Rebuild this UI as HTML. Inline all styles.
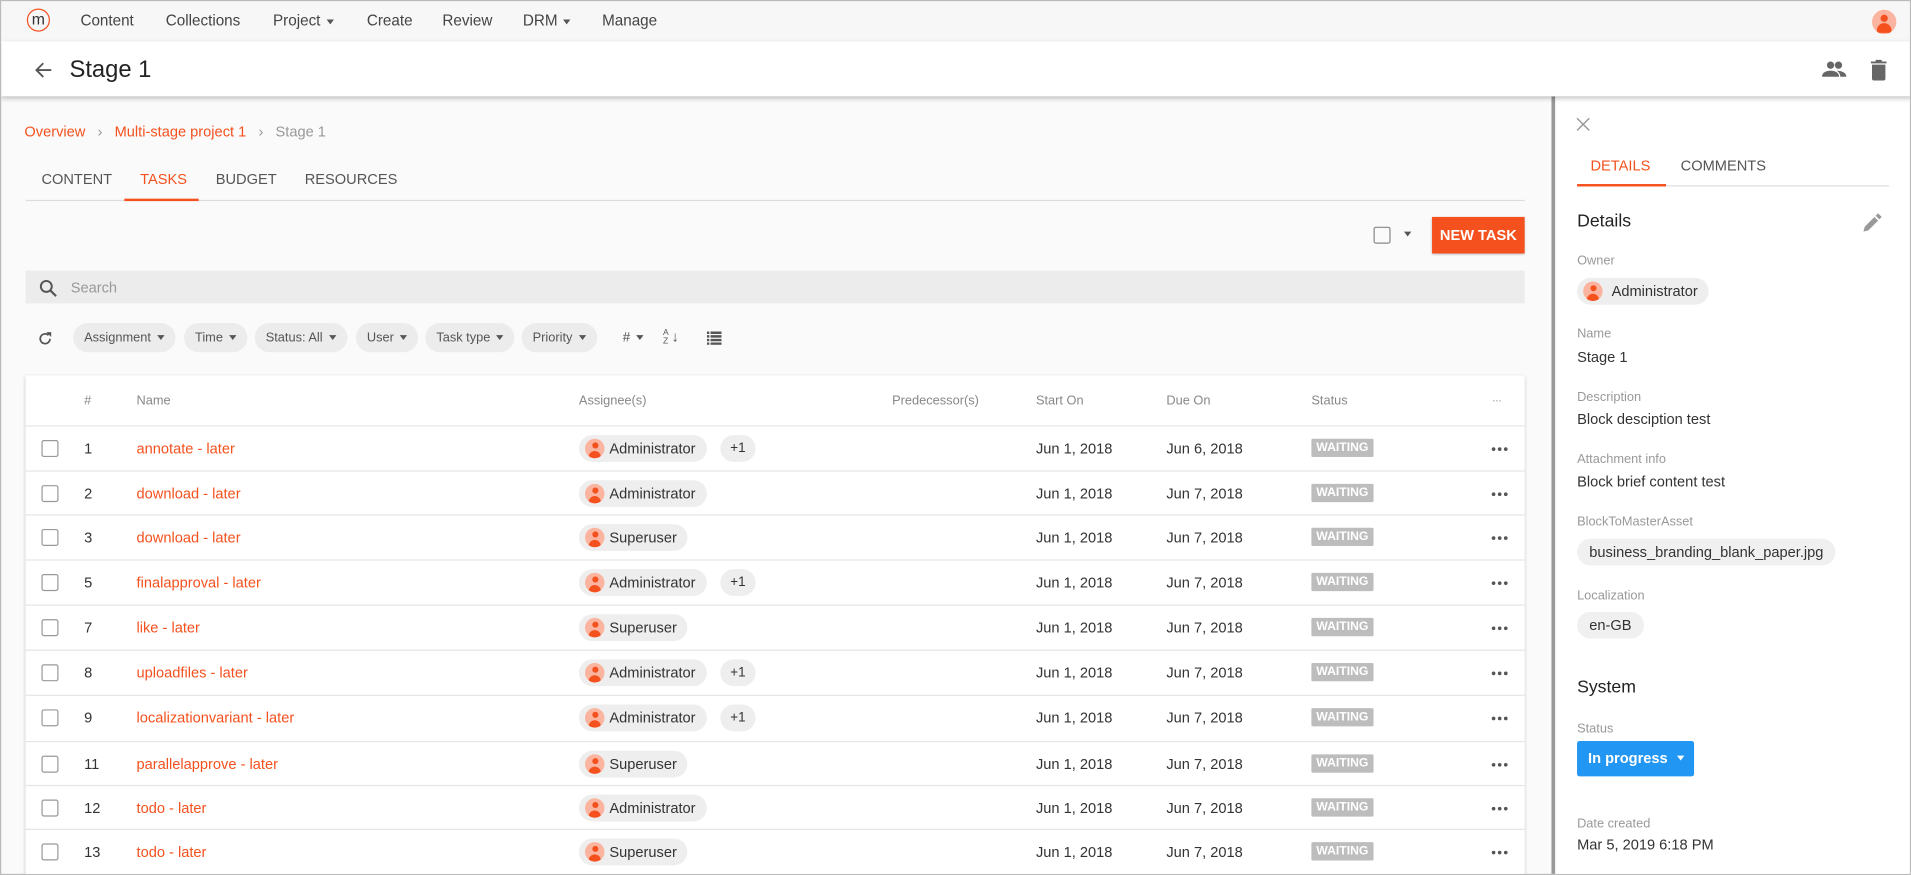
<!DOCTYPE html>
<html><head><meta charset="utf-8"><style>
*{box-sizing:border-box;margin:0;padding:0}
html,body{width:1911px;height:875px;overflow:hidden;background:#fafafa;font-family:"Liberation Sans",sans-serif;color:#333}
#w{position:absolute;left:0;top:0;width:1568px;height:718px;transform:scale(1.21875);transform-origin:0 0;border:1px solid #bbb;overflow:hidden;background:#fafafa}
.a{position:absolute;white-space:nowrap}
.or{color:#f4511e}
.nav{position:absolute;left:0;top:0;width:1568px;height:33px;background:#f7f7f7}
.nav span{position:absolute;top:9px;font-size:12.5px;color:#444}
.car{display:inline-block;width:0;height:0;border-left:3.5px solid transparent;border-right:3.5px solid transparent;border-top:4px solid #555;vertical-align:middle;margin-left:5px}
.hdr{position:absolute;left:0;top:33px;width:1568px;height:45px;background:#fff;box-shadow:0 2px 4px rgba(0,0,0,.25);z-index:2}
.chip{position:absolute;height:24px;border-radius:12px;background:#ececec;font-size:10.5px;color:#555;line-height:24px;padding:0 9px}
.card{position:absolute;left:20px;top:307px;width:1230px;height:420px;background:#fff;box-shadow:0 1px 3px rgba(0,0,0,.2)}
.th{position:absolute;top:15px;font-size:10.5px;color:#888}
.row{position:absolute;left:0;width:1230px;border-top:1px solid #e6e6e6}
.cb{position:absolute;left:13px;width:14px;height:14px;border:1.5px solid #999;border-radius:2px}
.t{position:absolute;font-size:12px}
.ac{position:absolute;height:22px;border-radius:11px;background:#eee;font-size:12px;line-height:22px;padding:0 9px 0 25px}
.av{position:absolute;left:5px;top:3px;width:16px;height:16px;border-radius:50%;background:#fbb49f;overflow:hidden}
.av:before{content:"";position:absolute;left:5.5px;top:3px;width:5px;height:5px;border-radius:50%;background:#f4511e}
.av:after{content:"";position:absolute;left:3px;top:9.5px;width:10px;height:8px;border-radius:5px 5px 0 0;background:#f4511e}
.p1{position:absolute;height:22px;width:29px;border-radius:11px;background:#eee;font-size:11px;line-height:22px;text-align:center}
.wt{position:absolute;left:1055px;background:#bdbdbd;color:#fff;font-weight:bold;font-size:10px;padding:2px 4px;border-radius:1px}
.dots{position:absolute;left:1203px;width:14px;height:4px}
.dots i{position:absolute;top:0;width:3px;height:3px;border-radius:50%;background:#555}
.rp{position:absolute;left:1272px;top:78px;width:296px;height:640px;background:#fff;border-left:3px solid #999}
.lb{position:absolute;left:20px;font-size:10.5px;color:#999}
.vl{position:absolute;left:20px;font-size:12px;color:#333}
.rc{position:absolute;left:20px;height:22px;border-radius:11px;background:#f0f0f0;font-size:12px;line-height:22px;padding:0 10px}
</style></head><body><div id="w">
<div class="nav">
 <div class="a" style="left:21px;top:6px;width:19px;height:19px;border:1.2px solid #f4511e;border-radius:50%;font-size:13px;text-align:center;line-height:16px;color:#333">m</div>
 <span style="left:65px">Content</span><span style="left:135px">Collections</span><span style="left:223px">Project<i class="car"></i></span><span style="left:300px">Create</span><span style="left:362px">Review</span><span style="left:428px">DRM<i class="car"></i></span><span style="left:493px">Manage</span>
 <div class="a" style="left:1535px;top:7px;width:20px;height:20px;border-radius:50%;background:#fbb49f;overflow:hidden"><div class="a" style="left:7px;top:4px;width:6px;height:6px;border-radius:50%;background:#f4511e"></div><div class="a" style="left:4px;top:11px;width:12px;height:8px;border-radius:6px 6px 2px 2px;background:#f4511e"></div></div>
</div>
<div class="hdr">
 <svg class="a" style="left:27px;top:16px" width="15" height="15" viewBox="0 0 16 16"><path d="M15 8H2M8 2L2 8l6 6" stroke="#555" stroke-width="1.6" fill="none"/></svg>
 <div class="a" style="left:56px;top:12px;font-size:19.5px;color:#222">Stage 1</div>
 <svg class="a" style="left:1494px;top:16px" width="20" height="14" viewBox="0 0 20 14"><circle cx="7" cy="3.5" r="3" fill="#666"/><circle cx="13.5" cy="3.5" r="3" fill="#666"/><path d="M0 13c0-4 4-5 7-5s7 1 7 5zM12 8c3 0 8 1 8 5h-5c0-2-1-4-3-5z" fill="#666"/></svg>
 <svg class="a" style="left:1534px;top:15px" width="13" height="17" viewBox="0 0 13 17"><path d="M4 0h5v1.5h4V3H0V1.5h4zM1 4h11v11.5a1.5 1.5 0 0 1-1.5 1.5h-8A1.5 1.5 0 0 1 1 15.5z" fill="#666"/></svg>
</div>
<div class="a" style="left:19px;top:100px;font-size:12px"><span class="or">Overview</span><span style="color:#999;margin:0 10px">&#8250;</span><span class="or">Multi-stage project 1</span><span style="color:#999;margin:0 10px">&#8250;</span><span style="color:#999">Stage 1</span></div>
<div class="a" style="left:20px;top:163px;width:1230px;height:1px;background:#ddd"></div>
<div class="a" style="left:33px;top:139px;font-size:12px;color:#555">CONTENT</div>
<div class="a or" style="left:114px;top:139px;font-size:12px">TASKS</div>
<div class="a" style="left:101px;top:162px;width:61px;height:2px;background:#f4511e"></div>
<div class="a" style="left:176px;top:139px;font-size:12px;color:#555">BUDGET</div>
<div class="a" style="left:249px;top:139px;font-size:12px;color:#555">RESOURCES</div>
<div class="a" style="left:1126px;top:185px;width:14px;height:14px;border:1.5px solid #888;border-radius:2px"></div>
<div class="a" style="left:1146px;top:182px"><i class="car"></i></div>
<div class="a" style="left:1174px;top:177px;width:76px;height:30px;background:#f4511e;color:#fff;font-weight:bold;font-size:12px;line-height:30px;text-align:center;box-shadow:0 1px 2px rgba(0,0,0,.3)">NEW TASK</div>
<div class="a" style="left:20px;top:221px;width:1230px;height:27px;background:#ececec"></div>
<svg class="a" style="left:31px;top:228px" width="15" height="15" viewBox="0 0 15 15"><circle cx="6" cy="6" r="4.5" stroke="#555" stroke-width="1.6" fill="none"/><path d="M9.3 9.3L14 14" stroke="#555" stroke-width="1.8"/></svg>
<div class="a" style="left:57px;top:228px;font-size:12px;color:#999">Search</div>
<svg class="a" style="left:30px;top:271px" width="12" height="12" viewBox="0 0 12 12"><path d="M10 6a4 4 0 1 1-1.2-2.9" stroke="#555" stroke-width="1.4" fill="none"/><path d="M7 0.5h4v4z" fill="#555"/></svg>
<div class="chip" style="left:59px;top:264px">Assignment<i class="car"></i></div>
<div class="chip" style="left:150px;top:264px">Time<i class="car"></i></div>
<div class="chip" style="left:208px;top:264px">Status: All<i class="car"></i></div>
<div class="chip" style="left:291px;top:264px">User<i class="car"></i></div>
<div class="chip" style="left:348px;top:264px">Task type<i class="car"></i></div>
<div class="chip" style="left:427px;top:264px">Priority<i class="car"></i></div>
<div class="a" style="left:510px;top:270px;font-size:11px;color:#555">#<i class="car"></i></div>
<div class="a" style="left:543px;top:269px;font-size:7px;line-height:7px;color:#555">A<br>Z</div><div class="a" style="left:550px;top:268px;font-size:12px;color:#555">&#8595;</div>
<svg class="a" style="left:579px;top:271px" width="12" height="11" viewBox="0 0 12 11"><path d="M0 0h2v2H0zM3 0h9v2H3zM0 3h2v2H0zM3 3h9v2H3zM0 6h2v2H0zM3 6h9v2H3zM0 9h2v2H0zM3 9h9v2H3z" fill="#555"/></svg>
<div class="card">
 <div class="th" style="left:48px">#</div><div class="th" style="left:91px">Name</div><div class="th" style="left:454px">Assignee(s)</div><div class="th" style="left:711px">Predecessor(s)</div><div class="th" style="left:829px">Start On</div><div class="th" style="left:936px">Due On</div><div class="th" style="left:1055px">Status</div><div class="th" style="left:1203px;letter-spacing:-1px;color:#aaa">&middot;&middot;&middot;</div>
</div>
<div id="rows"></div>
<div class="rp">
 <svg class="a" style="left:17px;top:17px" width="12" height="12" viewBox="0 0 12 12"><path d="M1 1l10 10M11 1L1 11" stroke="#999" stroke-width="1.2"/></svg>
 <div class="a or" style="left:29px;top:50px;font-size:12px">DETAILS</div>
 <div class="a" style="left:103px;top:50px;font-size:12px;color:#555">COMMENTS</div>
 <div class="a" style="left:18px;top:73px;width:256px;height:1px;background:#ddd"></div>
 <div class="a" style="left:18px;top:72px;width:73px;height:2px;background:#f4511e"></div>
 <div class="a" style="left:18px;top:95px;font-size:14.5px;color:#222">Details</div>
 <svg class="a" style="left:252px;top:96px" width="16" height="16" viewBox="0 0 16 16"><path d="M1 15l1-4 8-8 3 3-8 8zM11 2l2-2 3 3-2 2z" fill="#999"/></svg>
 <div class="lb" style="left:18px;top:129px">Owner</div>
 <div class="ac" style="left:18px;top:149px">&nbsp;Administrator<div class="av"></div></div>
 <div class="lb" style="left:18px;top:189px">Name</div><div class="vl" style="left:18px;top:207px">Stage 1</div>
 <div class="lb" style="left:18px;top:241px">Description</div><div class="vl" style="left:18px;top:258px">Block desciption test</div>
 <div class="lb" style="left:18px;top:292px">Attachment info</div><div class="vl" style="left:18px;top:309px">Block brief content test</div>
 <div class="lb" style="left:18px;top:343px">BlockToMasterAsset</div>
 <div class="rc" style="left:18px;top:363px">business_branding_blank_paper.jpg</div>
 <div class="lb" style="left:18px;top:404px">Localization</div>
 <div class="rc" style="left:18px;top:423px">en-GB</div>
 <div class="a" style="left:18px;top:477px;font-size:14.5px;color:#222">System</div>
 <div class="lb" style="left:18px;top:513px">Status</div>
 <div class="a" style="left:18px;top:529px;width:96px;height:29px;background:#2196f3;color:#fff;font-weight:bold;font-size:12px;line-height:29px;padding-left:9px;border-radius:2px">In progress<span style="position:absolute;left:82px;top:12px;border-left:3.5px solid transparent;border-right:3.5px solid transparent;border-top:4px solid #fff"></span></div>
 <div class="lb" style="left:18px;top:591px">Date created</div><div class="vl" style="left:18px;top:607px">Mar 5, 2019 6:18 PM</div>
</div>
<script>
var d=[[1,"annotate - later","Administrator",1,"Jun 6, 2018",366],[2,"download - later","Administrator",0,"Jun 7, 2018",403],[3,"download - later","Superuser",0,"Jun 7, 2018",439],[5,"finalapproval - later","Administrator",1,"Jun 7, 2018",476],[7,"like - later","Superuser",0,"Jun 7, 2018",513],[8,"uploadfiles - later","Administrator",1,"Jun 7, 2018",550],[9,"localizationvariant - later","Administrator",1,"Jun 7, 2018",587],[11,"parallelapprove - later","Superuser",0,"Jun 7, 2018",625],[12,"todo - later","Administrator",0,"Jun 7, 2018",661],[13,"todo - later","Superuser",0,"Jun 7, 2018",697]];
var h="";d.forEach(function(r){var c=r[5],top=c-18;
h+='<div class="row" style="left:20px;top:'+top+'px;height:37px">'+
'<div class="cb" style="top:11px"></div>'+
'<div class="t" style="left:48px;top:11px">'+r[0]+'</div>'+
'<div class="t or" style="left:91px;top:11px">'+r[1]+'</div>'+
'<div class="ac" style="left:454px;top:7px">'+r[2]+'<div class="av"></div></div>'+
(r[3]?'<div class="p1" style="left:570px;top:7px">+1</div>':'')+
'<div class="t" style="left:829px;top:11px">Jun 1, 2018</div>'+
'<div class="t" style="left:936px;top:11px">'+r[4]+'</div>'+
'<div class="wt" style="top:10px">WAITING</div>'+
'<div class="dots" style="top:17px"><i style="left:0"></i><i style="left:5px"></i><i style="left:10px"></i></div></div>';});
document.getElementById("rows").innerHTML=h;
</script>
</div></body></html>
